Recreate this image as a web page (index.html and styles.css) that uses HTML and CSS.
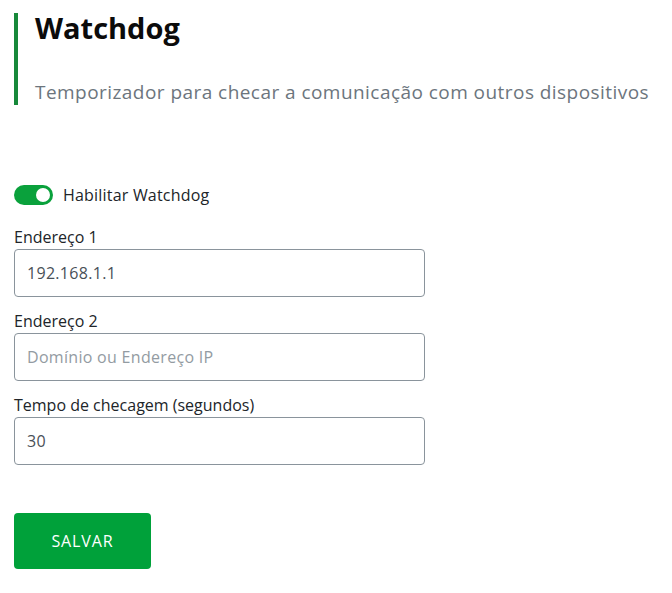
FILE: index.html
```html
<!DOCTYPE html>
<html lang="pt">
<head>
<meta charset="utf-8">
<link rel="stylesheet" href="styles.css">
</head>
<body>
<div class="page">
  <header class="header">
    <h1 class="title">Watchdog</h1>
    <p class="subtitle">Temporizador para checar a comunicação com outros dispositivos</p>
  </header>
  <form class="form">
    <label class="switch-row">
      <span class="switch"><span class="knob"></span></span>
      <span class="switch-label">Habilitar Watchdog</span>
    </label>
    <div class="group">
      <label class="label">Endereço 1</label>
      <input class="input" type="text" value="192.168.1.1">
    </div>
    <div class="group">
      <label class="label">Endereço 2</label>
      <input class="input" type="text" placeholder="Domínio ou Endereço IP">
    </div>
    <div class="group">
      <label class="label">Tempo de checagem (segundos)</label>
      <input class="input" type="text" value="30">
    </div>
    <button class="btn" type="button">SALVAR</button>
  </form>
</div>
</body>
</html>
```
FILE: styles.css
```css
html, body {
  margin: 0;
  padding: 0;
  background: #fff;
}
body {
  font-family: "Open Sans", "Noto Sans", sans-serif;
  color: #212529;
}
.page {
  padding: 13px 14px 0 14px;
}
.header {
  border-left: 4px solid #17893a;
  padding-left: 17px;
  height: 92px;
  box-sizing: border-box;
}
.title {
  margin: 0;
  font-size: 29px;
  font-weight: 700;
  line-height: 30px;
  color: #0b0b0b;
}
.subtitle {
  margin: 37px 0 0 0;
  font-size: 19px;
  line-height: 24px;
  letter-spacing: 0.45px;
  color: #6c757d;
  white-space: nowrap;
}
.form {
  margin-top: 80px;
  width: 411px;
}
.switch-row {
  display: flex;
  align-items: center;
  gap: 10px;
  height: 20px;
  margin-bottom: 20px;
}
.switch {
  width: 39px;
  height: 20px;
  border-radius: 10px;
  background: #0aa13c;
  display: flex;
  align-items: center;
  justify-content: flex-end;
  padding-right: 3px;
  box-sizing: border-box;
}
.knob {
  width: 14px;
  height: 14px;
  border-radius: 50%;
  background: #fff;
}
.switch-label {
  font-size: 16px;
  letter-spacing: 0.2px;
  color: #212529;
}
.group {
  margin-bottom: 12px;
}
.label {
  display: block;
  font-size: 16px;
  line-height: 20px;
  padding-top: 2px;
  margin-bottom: 2px;
  color: #212529;
}
.input {
  display: block;
  width: 100%;
  height: 48px;
  box-sizing: border-box;
  border: 1px solid #8a949c;
  border-radius: 4px;
  padding: 0 12px;
  font-family: inherit;
  font-size: 16px;
  letter-spacing: 0.3px;
  color: #495057;
  background: #fff;
  outline: none;
}
.input::placeholder {
  color: #939ba2;
}
.btn {
  margin-top: 36px;
  width: 137px;
  height: 56px;
  border: none;
  border-radius: 4px;
  background: #00a13a;
  color: #fff;
  font-family: inherit;
  font-size: 16px;
  font-weight: 500;
  letter-spacing: 0.9px;
  cursor: pointer;
}
```
